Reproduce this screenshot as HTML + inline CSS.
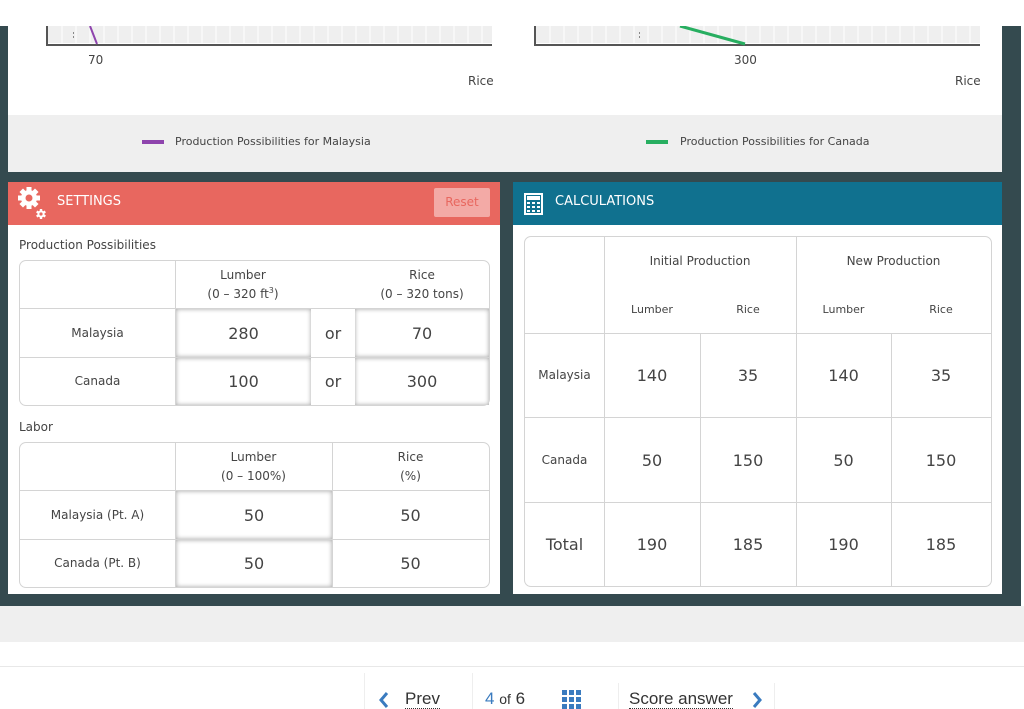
<!DOCTYPE html>
<html><head><style>
*{margin:0;padding:0;box-sizing:border-box}
body{width:1024px;height:709px;overflow:hidden;background:#fff;font-family:"DejaVu Sans","Liberation Sans",sans-serif;color:#444;position:relative}
.a{position:absolute}
.t{position:absolute;text-align:center;display:flex;align-items:center;justify-content:center;line-height:19px}
.s12{font-size:12px}
.s16{font-size:16px;color:#444}
.inp{box-shadow:inset 0 0 5px rgba(0,0,0,.35);background:#fff}
.bd{position:absolute;background:#d4d4d4}
</style></head><body>
<div class="a" style="left:0;top:26px;width:1021px;height:580px;background:#344a4f"></div>
<div class="a" style="left:8px;top:26px;width:994px;height:146px;background:#fff"></div>
<div class="a" style="left:8px;top:115px;width:994px;height:57px;background:#efefef"></div>
<svg class="a" style="left:0;top:26px" width="1024" height="20">
<rect x="48" y="0" width="444" height="17" fill="#efefef"/>
<rect x="536" y="0" width="444" height="17" fill="#efefef"/>
<g stroke="#fff" stroke-width="1">
<path d="M62 0v17M76 0v17M90 0v17M104 0v17M118 0v17M132 0v17M146 0v17M160 0v17M174 0v17M188 0v17M202 0v17M216 0v17M230 0v17M244 0v17M258 0v17M272 0v17M286 0v17M300 0v17M314 0v17M328 0v17M342 0v17M356 0v17M370 0v17M384 0v17M398 0v17M412 0v17M426 0v17M440 0v17M454 0v17M468 0v17M482 0v17"/>
<path d="M550 0v17M564 0v17M578 0v17M592 0v17M606 0v17M620 0v17M634 0v17M648 0v17M662 0v17M676 0v17M690 0v17M704 0v17M718 0v17M732 0v17M746 0v17M760 0v17M774 0v17M788 0v17M802 0v17M816 0v17M830 0v17M844 0v17M858 0v17M872 0v17M886 0v17M900 0v17M914 0v17M928 0v17M942 0v17M956 0v17M970 0v17"/>
</g>
<path d="M47 0v19H492M535 0v19H980" stroke="#555" stroke-width="2" fill="none"/>
<path d="M90 0L97 18" stroke="#8e44ad" stroke-width="2"/>
<path d="M680 0L745 18" stroke="#27ae60" stroke-width="3"/>
<rect x="73" y="6" width="1" height="2" fill="#888"/><rect x="73" y="10" width="1" height="2" fill="#888"/>
<rect x="639" y="6" width="1" height="2" fill="#888"/><rect x="639" y="10" width="1" height="2" fill="#888"/>
</svg>
<div class="a s12" style="left:88px;top:53px">70</div>
<div class="a s12" style="left:468px;top:74px">Rice</div>
<div class="a s12" style="left:734px;top:53px">300</div>
<div class="a s12" style="left:955px;top:74px">Rice</div>
<div class="a" style="left:142px;top:140px;width:22px;height:4px;background:#8e44ad"></div>
<div class="a" style="left:175px;top:135px;font-size:11px;color:#444">Production Possibilities for Malaysia</div>
<div class="a" style="left:646px;top:140px;width:22px;height:4px;background:#27ae60"></div>
<div class="a" style="left:680px;top:135px;font-size:11px;color:#444">Production Possibilities for Canada</div>

<div class="a" style="left:8px;top:182px;width:492px;height:412px;background:#fff"></div>
<div class="a" style="left:8px;top:182px;width:492px;height:43px;background:#e8675f"></div>
<svg class="a" style="left:17px;top:186px" width="32" height="34">
<g transform="translate(12,12)" fill="#fff"><rect x="-2.5" y="-11" width="5" height="22"/><rect x="-2.5" y="-11" width="5" height="22" transform="rotate(45)"/><rect x="-2.5" y="-11" width="5" height="22" transform="rotate(90)"/><rect x="-2.5" y="-11" width="5" height="22" transform="rotate(135)"/><circle r="8"/><circle r="3.5" fill="#e8675f"/></g>
<g transform="translate(24,28)" fill="#fff"><rect x="-1.2" y="-5" width="2.4" height="10"/><rect x="-1.2" y="-5" width="2.4" height="10" transform="rotate(60)"/><rect x="-1.2" y="-5" width="2.4" height="10" transform="rotate(120)"/><circle r="3.6"/><circle r="1.6" fill="#e8675f"/></g>
</svg>
<div class="a" style="left:57px;top:194px;font-size:13px;color:#fff">SETTINGS</div>
<div class="a" style="left:434px;top:188px;width:56px;height:29px;background:#f3aaa6;border-radius:2px;color:#e8675f;font-size:12px;text-align:center;line-height:29px">Reset</div>
<div class="a s12" style="left:19px;top:238px">Production Possibilities</div>
<div class="a" style="left:19px;top:260px;width:471px;height:146px;border:1px solid #d4d4d4;border-radius:7px"></div>
<div class="bd" style="left:20px;top:308px;width:469px;height:1px"></div>
<div class="bd" style="left:20px;top:357px;width:469px;height:1px"></div>
<div class="bd" style="left:175px;top:261px;width:1px;height:144px"></div>
<div class="t s12" style="left:175px;top:261px;width:136px;height:47px"><div>Lumber<br>(0 – 320 ft<sup style="font-size:8px;line-height:0">3</sup>)</div></div>
<div class="t s12" style="left:355px;top:261px;width:134px;height:47px"><div>Rice<br>(0 – 320 tons)</div></div>
<div class="t s12" style="left:20px;top:309px;width:155px;height:48px">Malaysia</div>
<div class="t s12" style="left:20px;top:358px;width:155px;height:47px">Canada</div>
<div class="t s16 inp" style="left:176px;top:309px;width:135px;height:48px">280</div>
<div class="t s16" style="left:311px;top:309px;width:44px;height:48px">or</div>
<div class="t s16 inp" style="left:355px;top:309px;width:134px;height:48px">70</div>
<div class="t s16 inp" style="left:176px;top:358px;width:135px;height:47px">100</div>
<div class="t s16" style="left:311px;top:358px;width:44px;height:47px">or</div>
<div class="t s16 inp" style="left:355px;top:358px;width:134px;height:47px">300</div>

<div class="a s12" style="left:19px;top:420px">Labor</div>
<div class="a" style="left:19px;top:442px;width:471px;height:146px;border:1px solid #d4d4d4;border-radius:7px"></div>
<div class="bd" style="left:20px;top:490px;width:469px;height:1px"></div>
<div class="bd" style="left:20px;top:539px;width:469px;height:1px"></div>
<div class="bd" style="left:175px;top:443px;width:1px;height:144px"></div>
<div class="bd" style="left:332px;top:443px;width:1px;height:144px"></div>
<div class="t s12" style="left:175px;top:443px;width:157px;height:47px"><div>Lumber<br>(0 – 100%)</div></div>
<div class="t s12" style="left:332px;top:443px;width:157px;height:47px"><div>Rice<br>(%)</div></div>
<div class="t s12" style="left:20px;top:491px;width:155px;height:48px">Malaysia (Pt. A)</div>
<div class="t s12" style="left:20px;top:540px;width:155px;height:47px">Canada (Pt. B)</div>
<div class="t s16 inp" style="left:176px;top:491px;width:156px;height:48px">50</div>
<div class="t s16" style="left:332px;top:491px;width:157px;height:48px">50</div>
<div class="t s16 inp" style="left:176px;top:540px;width:156px;height:47px">50</div>
<div class="t s16" style="left:332px;top:540px;width:157px;height:47px">50</div>

<div class="a" style="left:513px;top:182px;width:489px;height:412px;background:#fff"></div>
<div class="a" style="left:513px;top:182px;width:489px;height:43px;background:#10718f"></div>
<svg class="a" style="left:524px;top:193px" width="20" height="22"><rect x="1" y="1" width="17" height="20" fill="none" stroke="#fff" stroke-width="2"/><rect x="3" y="3" width="13" height="4" fill="#fff"/><g fill="#fff"><rect x="3" y="9" width="3" height="2"/><rect x="8" y="9" width="3" height="2"/><rect x="13" y="9" width="3" height="2"/><rect x="3" y="13" width="3" height="2"/><rect x="8" y="13" width="3" height="2"/><rect x="13" y="13" width="3" height="2"/><rect x="3" y="17" width="3" height="2"/><rect x="8" y="17" width="3" height="2"/><rect x="13" y="17" width="3" height="2"/></g></svg>
<div class="a" style="left:555px;top:194px;font-size:13px;color:#fff">CALCULATIONS</div>
<div class="a" style="left:524px;top:236px;width:468px;height:351px;border:1px solid #d4d4d4;border-radius:7px"></div>
<div class="bd" style="left:604px;top:237px;width:1px;height:349px"></div>
<div class="bd" style="left:796px;top:237px;width:1px;height:349px"></div>
<div class="bd" style="left:700px;top:333px;width:1px;height:253px"></div>
<div class="bd" style="left:891px;top:333px;width:1px;height:253px"></div>
<div class="bd" style="left:525px;top:333px;width:466px;height:1px"></div>
<div class="bd" style="left:525px;top:417px;width:466px;height:1px"></div>
<div class="bd" style="left:525px;top:502px;width:466px;height:1px"></div>
<div class="t s12" style="left:604px;top:250px;width:192px;height:22px">Initial Production</div>
<div class="t s12" style="left:796px;top:250px;width:195px;height:22px">New Production</div>
<div class="t" style="left:604px;top:298px;width:96px;height:22px;font-size:11px">Lumber</div>
<div class="t" style="left:700px;top:298px;width:96px;height:22px;font-size:11px">Rice</div>
<div class="t" style="left:796px;top:298px;width:95px;height:22px;font-size:11px">Lumber</div>
<div class="t" style="left:891px;top:298px;width:100px;height:22px;font-size:11px">Rice</div>
<div class="t s12" style="left:525px;top:334px;width:79px;height:83px">Malaysia</div>
<div class="t s12" style="left:525px;top:418px;width:79px;height:84px">Canada</div>
<div class="t s16" style="left:525px;top:503px;width:79px;height:83px">Total</div>
<div class="t s16" style="left:604px;top:334px;width:96px;height:83px">140</div>
<div class="t s16" style="left:700px;top:334px;width:96px;height:83px">35</div>
<div class="t s16" style="left:796px;top:334px;width:95px;height:83px">140</div>
<div class="t s16" style="left:891px;top:334px;width:100px;height:83px">35</div>
<div class="t s16" style="left:604px;top:418px;width:96px;height:84px">50</div>
<div class="t s16" style="left:700px;top:418px;width:96px;height:84px">150</div>
<div class="t s16" style="left:796px;top:418px;width:95px;height:84px">50</div>
<div class="t s16" style="left:891px;top:418px;width:100px;height:84px">150</div>
<div class="t s16" style="left:604px;top:503px;width:96px;height:83px">190</div>
<div class="t s16" style="left:700px;top:503px;width:96px;height:83px">185</div>
<div class="t s16" style="left:796px;top:503px;width:95px;height:83px">190</div>
<div class="t s16" style="left:891px;top:503px;width:100px;height:83px">185</div>

<div class="a" style="left:0;top:606px;width:1024px;height:36px;background:#efefef"></div>
<div class="a" style="left:0;top:666px;width:1024px;height:1px;background:#e8e8e8"></div>
<div class="bd" style="left:364px;top:673px;width:1px;height:36px;background:#eee"></div>
<div class="bd" style="left:472px;top:673px;width:1px;height:36px;background:#eee"></div>
<div class="bd" style="left:618px;top:683px;width:1px;height:26px;background:#eee"></div>
<div class="bd" style="left:774px;top:683px;width:1px;height:26px;background:#eee"></div>
<svg class="a" style="left:378px;top:691px" width="12" height="18"><path d="M9 2L3 9l6 7" stroke="#3a7bbf" stroke-width="3" fill="none"/></svg>
<div class="a" style="left:405px;top:690px;font-family:'Liberation Sans',sans-serif;font-size:17px;color:#333;border-bottom:1px dotted #333;line-height:18px">Prev</div>
<div class="a" style="left:485px;top:690px;font-family:'Liberation Sans',sans-serif;font-size:17px;color:#3a7bbf;line-height:18px">4 <span style="color:#333;font-size:14px">of</span> <span style="color:#333">6</span></div>
<svg class="a" style="left:562px;top:690px" width="19" height="19"><g fill="#3a7bbf"><rect x="0" y="0" width="5" height="5"/><rect x="7" y="0" width="5" height="5"/><rect x="14" y="0" width="5" height="5"/><rect x="0" y="7" width="5" height="5"/><rect x="7" y="7" width="5" height="5"/><rect x="14" y="7" width="5" height="5"/><rect x="0" y="14" width="5" height="5"/><rect x="7" y="14" width="5" height="5"/><rect x="14" y="14" width="5" height="5"/></g></svg>
<div class="a" style="left:629px;top:690px;font-family:'Liberation Sans',sans-serif;font-size:17px;color:#333;border-bottom:1px dotted #333;line-height:18px">Score answer</div>
<svg class="a" style="left:751px;top:691px" width="12" height="18"><path d="M3 2l6 7-6 7" stroke="#3a7bbf" stroke-width="3" fill="none"/></svg>
</body></html>
